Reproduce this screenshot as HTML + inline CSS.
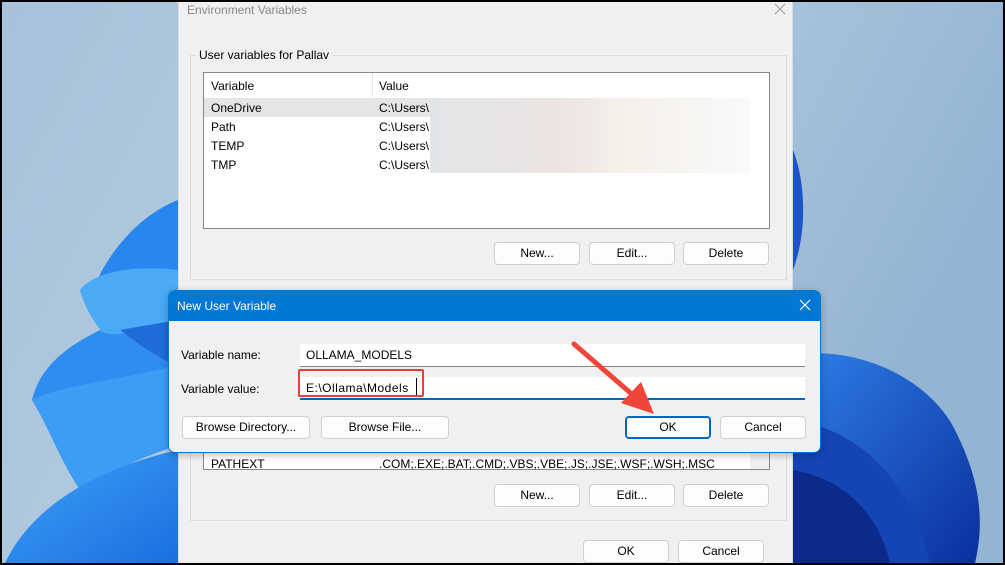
<!DOCTYPE html>
<html><head><meta charset="utf-8"><style>
*{margin:0;padding:0;box-sizing:border-box}
body{width:1005px;height:565px;overflow:hidden;background:#000;font-family:"Liberation Sans",sans-serif;font-size:12px;color:#000;position:relative}
.abs{position:absolute}
.btn{position:absolute;height:23px;background:#fdfdfd;border:1px solid #d0d0d0;border-radius:4px;text-align:center;line-height:21px;font-size:12px;color:#000}
.t{position:absolute;white-space:nowrap}
</style></head><body>
<svg class="abs" style="left:2px;top:2px" width="1001" height="561" viewBox="2 2 1001 561">
<defs>
<linearGradient id="bg" x1="0" y1="0" x2="1" y2="0.3"><stop offset="0" stop-color="#a6c1d9"/><stop offset="0.5" stop-color="#b7cde0"/><stop offset="1" stop-color="#93b5d3"/></linearGradient>
<linearGradient id="b1" x1="0" y1="0" x2="1" y2="1"><stop offset="0" stop-color="#3ea2f7"/><stop offset="1" stop-color="#1a6fe0"/></linearGradient>
<linearGradient id="b2" x1="0" y1="0" x2="1" y2="1"><stop offset="0" stop-color="#2f7fe8"/><stop offset="1" stop-color="#0a2f9c"/></linearGradient>
</defs>
<rect x="0" y="0" width="1005" height="565" fill="url(#bg)"/>
<path d="M178 200 C140 215 110 250 95 285 C120 280 160 275 178 278 Z" fill="#2a86ef"/>
<path d="M178 270 C140 265 95 270 80 290 C85 310 100 335 125 355 C150 340 170 330 178 330 Z" fill="#4aaaf6"/>
<path d="M178 320 C140 330 110 340 100 330 C70 345 40 365 32 400 C60 390 110 385 178 370 Z" fill="#2f8cf0"/>
<path d="M32 400 C50 430 60 460 80 490 C110 470 150 455 178 445 L178 365 C120 380 60 385 32 400 Z" fill="#3d9cf4"/>
<path d="M5 563 C30 510 90 470 178 450 L178 563 Z" fill="url(#b1)"/>
<path d="M120 330 C140 345 160 360 178 365 L178 320 Z" fill="#1f6cd8"/>
<path d="M793 150 C805 180 808 230 793 270 Z" fill="#1b55c8"/>
<path d="M793 355 C860 345 930 380 955 430 C980 480 985 520 975 563 L793 563 Z" fill="url(#b2)"/>
<path d="M793 420 C860 430 910 480 930 563 L793 563 Z" fill="#1544b5"/>
<path d="M793 470 C850 480 880 520 890 563 L793 563 Z" fill="#0b2a8a"/>
</svg>

<div class="abs" style="left:178px;top:2px;width:615px;height:561px;background:#f0f0f0;border-left:1px solid #ddd;border-right:1px solid #ddd"></div>
<div class="t" style="left:187px;top:3px;color:#888;font-size:12px">Environment Variables</div>
<svg class="abs" style="left:774px;top:3px" width="12" height="12"><path d="M1 1L11 11M11 1L1 11" stroke="#999" stroke-width="1"/></svg>
<div class="abs" style="left:190px;top:55px;width:597px;height:225px;border:1px solid #dcdcdc"></div>
<div class="t" style="left:196px;top:48px;background:#f0f0f0;padding:0 3px">User variables for Pallav</div>
<div class="abs" style="left:203px;top:72px;width:567px;height:157px;background:#fff;border:1px solid #828790"></div>
<div class="abs" style="left:372px;top:73px;width:1px;height:24px;background:#e5e5e5"></div>
<div class="t" style="left:211px;top:79px">Variable</div>
<div class="t" style="left:379px;top:79px">Value</div>
<div class="abs" style="left:204px;top:98px;width:546px;height:19px;background:#e5e5e5"></div>
<div class="t" style="left:211px;top:101px">OneDrive</div><div class="t" style="left:379px;top:101px">C:\Users\</div>
<div class="t" style="left:211px;top:120px">Path</div><div class="t" style="left:379px;top:120px">C:\Users\</div>
<div class="t" style="left:211px;top:139px">TEMP</div><div class="t" style="left:379px;top:139px">C:\Users\</div>
<div class="t" style="left:211px;top:158px">TMP</div><div class="t" style="left:379px;top:158px">C:\Users\</div>
<div class="abs" style="left:430px;top:98px;width:320px;height:75px;background:linear-gradient(90deg,#e2e5e8,#ece4e2 40%,#f4f0ea 60%,#fafafa)"></div>
<div class="btn" style="left:494px;top:242px;width:86px">New...</div>
<div class="btn" style="left:589px;top:242px;width:86px">Edit...</div>
<div class="btn" style="left:683px;top:242px;width:86px">Delete</div>

<div class="abs" style="left:190px;top:440px;width:597px;height:81px;border:1px solid #dcdcdc;border-top:none"></div>
<div class="abs" style="left:203px;top:440px;width:567px;height:30px;background:#fff;border:1px solid #828790;border-top:none"></div>
<div class="abs" style="left:750px;top:440px;width:19px;height:29px;background:#f0f0f0"></div>
<div class="t" style="left:211px;top:457px">PATHEXT</div>
<div class="t" style="left:379px;top:457px">.COM;.EXE;.BAT;.CMD;.VBS;.VBE;.JS;.JSE;.WSF;.WSH;.MSC</div>
<div class="btn" style="left:494px;top:484px;width:86px">New...</div>
<div class="btn" style="left:589px;top:484px;width:86px">Edit...</div>
<div class="btn" style="left:683px;top:484px;width:86px">Delete</div>
<div class="btn" style="left:583px;top:540px;width:86px">OK</div>
<div class="btn" style="left:678px;top:540px;width:86px">Cancel</div>

<div class="abs" style="left:168px;top:290px;width:653px;height:163px;background:#f0f0f0;border:1px solid #0078d4;border-radius:7px;overflow:hidden;box-shadow:0 2px 8px rgba(0,0,0,.25)">
<div style="height:30px;background:#0078d4;color:#fff;font-size:12px;line-height:30px;padding-left:8px">New User Variable</div>
</div>
<svg class="abs" style="left:799px;top:299px" width="12" height="12"><path d="M1 1L11 11M11 1L1 11" stroke="#fff" stroke-width="1.2"/></svg>
<div class="t" style="left:181px;top:348px">Variable name:</div>
<div class="t" style="left:181px;top:382px">Variable value:</div>
<div class="abs" style="left:300px;top:344px;width:505px;height:23px;background:#fff;border-bottom:1px solid #868686"></div>
<div class="t" style="left:306px;top:348px">OLLAMA_MODELS</div>
<div class="abs" style="left:300px;top:377px;width:505px;height:23px;background:#fff;border-bottom:2px solid #0067c0"></div>
<div class="t" style="left:306px;top:381px;letter-spacing:0.5px">E:\Ollama\Models</div>
<div class="abs" style="left:416px;top:378px;width:1px;height:17px;background:#000"></div>
<div class="abs" style="left:298px;top:369px;width:126px;height:28px;border:2px solid #e8413a;border-radius:2px"></div>
<div class="btn" style="left:182px;top:416px;width:128px">Browse Directory...</div>
<div class="btn" style="left:321px;top:416px;width:128px">Browse File...</div>
<div class="btn" style="left:625px;top:416px;width:86px;border:1px solid #0067c0;box-shadow:inset 0 0 0 1px #0067c0 ">OK</div>
<div class="btn" style="left:720px;top:416px;width:86px">Cancel</div>

<svg class="abs" style="left:0;top:0" width="1005" height="565">
<line x1="574" y1="344" x2="634" y2="396" stroke="#f0463a" stroke-width="5" stroke-linecap="round"/>
<polygon points="621,403 641,382 654,414" fill="#f0463a"/>
</svg>
</body></html>
